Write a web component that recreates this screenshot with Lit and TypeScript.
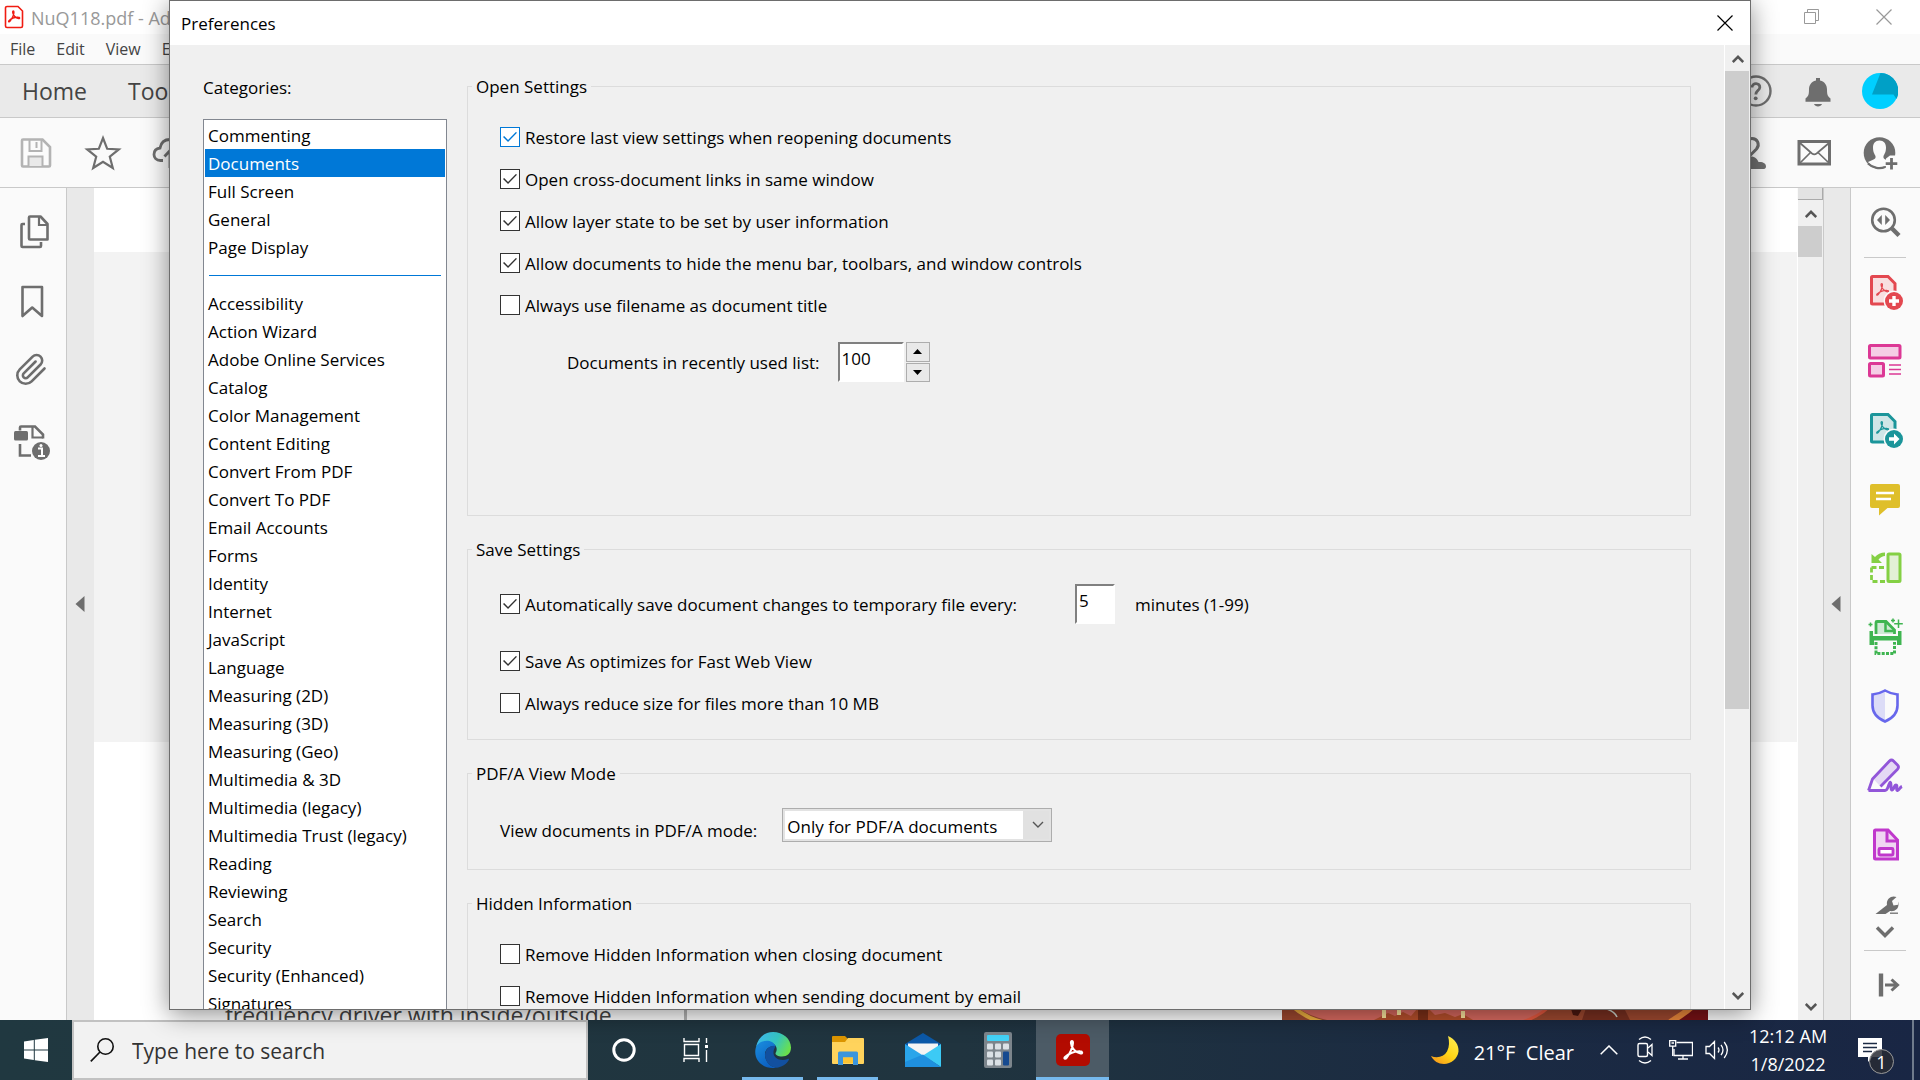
import { LitElement, html, css, svg, TemplateResult, SVGTemplateResult } from "lit";
import { customElement, property, state } from "lit/decorators.js";
import { classMap } from "lit/directives/class-map.js";

const trefoil = svg`<path d="M4 19c-1.600 1.600.2 2.700 1.800.6C8.600 16 12 9 12 5c0-2.600-2.100-2.600-2.100 0 0 4.200 5 10 9.600 10.600 2.600.2 2.100-2.300-.5-2.300C14 13.100 7.500 15.500 4 19z" fill="none" stroke-linejoin="round"/>`;

type Icon = { w: number; h: number; body: SVGTemplateResult };

const ICONS: Record<string, Icon> = {
  acrobatDoc: {
    w: 20, h: 24,
    body: svg`<path d="M3 1.500h11l4.500 4.500v15a1.500 1.500 0 0 1-1.500 1.500H3A1.500 1.500 0 0 1 1.500 21V3A1.500 1.500 0 0 1 3 1.500z" fill="#fff" stroke="#f01c12" stroke-width="1.600"/><g transform="translate(2.500 4) scale(.62)" stroke="#f01c12" stroke-width="2.200">${trefoil}</g>`,
  },
  restore: {
    w: 16, h: 16,
    body: svg`<path d="M.5 3.500h11v11H.5zM3.500 3.500v-3h11v11h-3" fill="none" stroke="#999"/>`,
  },
  close: { w: 16, h: 16, body: svg`<path d="M.5.5l15 15M15.500.5l-15 15" fill="none" stroke="currentColor" stroke-width="1.200"/>` },
  save: {
    w: 40, h: 40,
    body: svg`<path d="M6 6.500h19.500L33 14v18.500a1 1 0 0 1-1 1H6a1 1 0 0 1-1-1v-25a1 1 0 0 1 1-1z" fill="#fbfbfb" stroke="#b3b3b3" stroke-width="2.600"/><path d="M12.500 7v11h12V7" fill="none" stroke="#b3b3b3" stroke-width="2"/><path d="M19.500 9v6" stroke="#b3b3b3" stroke-width="2"/><path d="M11.500 33v-9.500h14V33" fill="#e9e9e9" stroke="#b3b3b3" stroke-width="2"/>`,
  },
  star: {
    w: 40, h: 40,
    body: svg`<path d="M20 5l4.200 10.800 11.600.6-9 7.300 3 11.300L20 28.700 10.200 35l3-11.300-9-7.300 11.600-.6z" fill="none" stroke="#6e6e6e" stroke-width="2.200"/>`,
  },
  cloud: {
    w: 40, h: 40,
    body: svg`<path d="M14 27.500H11.500c-4.500 0-6.500-3-6.500-6 0-3.500 2.500-6 6-6.500 1-5.500 5-8.500 10-8.500 6 0 9 4 9.500 9 4 .5 6 3 6 6.200 0 3.800-3 6.300-7 6.300h-2" fill="none" stroke="#6e6e6e" stroke-width="2.800"/><path d="M21 35V18M15.500 23.500l5.500-6 5.500 6" fill="none" stroke="#6e6e6e" stroke-width="2.800"/>`,
  },
  help: {
    w: 36, h: 36,
    body: svg`<circle cx="18" cy="18" r="14.500" fill="none" stroke="#6e6e6e" stroke-width="2.400"/><path d="M14 14.500c.2-5.500 8.200-5 7.800 0-.3 3-4 3.400-4 7" fill="none" stroke="#6e6e6e" stroke-width="2.800"/><circle cx="17.700" cy="25.300" r="1.900" fill="#6e6e6e"/>`,
  },
  bell: {
    w: 36, h: 36,
    body: svg`<path d="M16 5h4v2.500c5 1 7 5 7 9 0 6 1 7 3.500 9v3.300h-25v-3.300C8 23.500 9 22.500 9 16.500c0-4 2-8 7-9zM14 31h8c-1 3.200-7 3.200-8 0z" fill="#6e6e6e"/>`,
  },
  avatar: {
    w: 36, h: 36,
    body: svg`<circle cx="18" cy="18" r="18" fill="#00cfff"/><path d="M18.500 0A18 18 0 0 1 34.500 26l-3-4.500H10z" fill="#00a0c6"/>`,
  },
  share: {
    w: 40, h: 40,
    body: svg`<path d="M18 16c-3-5 1-10.500 6-10.500s8.500 5.500 4.500 10.500l-9 9" fill="none" stroke="#6e6e6e" stroke-width="3"/><path d="M10 36c0-4 3-5.500 6-5 1-5 3-7.500 7-7.500s6.500 2.500 7.500 5.500c4-.5 7.500 1 7.500 4.500 0 1.500-1 2.500-2 2.500z" fill="#6e6e6e"/>`,
  },
  mail: {
    w: 40, h: 40,
    body: svg`<rect x="5" y="8.500" width="30.500" height="22.500" fill="#fbfbfb" stroke="#6e6e6e" stroke-width="3"/><path d="M6 10l12 10.500q2.300 1.600 4.600 0L35 10M6 30l10.500-10.500M35 30L24 19.500" fill="none" stroke="#6e6e6e" stroke-width="1.700"/>`,
  },
  addUser: {
    w: 40, h: 40,
    body: svg`<circle cx="19.500" cy="20" r="15.800" fill="#6e6e6e"/><path d="M19.500 7.500c4.300 0 6.500 3 6.500 7 0 4.500-1.500 6.500-2.500 8.500-.4 2.500.5 3 3 4l4.500 2c-3 3.800-6.500 5.300-11.500 5.300s-8.500-1.500-11.500-5.300l4.500-2c2.500-1 3.400-1.500 3-4-1-2-2.500-4-2.500-8.500 0-4 2.200-7 6.500-7z" fill="#fbfbfb"/><path d="M26 37V25.500l4-3H40V38z" fill="#fbfbfb"/><path d="M8 30.500c5 5 12 5.500 17 3.500" fill="none" stroke="#6e6e6e" stroke-width="2.200"/><path d="M31.500 25v11.500M25.700 30.700h11.600" stroke="#6e6e6e" stroke-width="2.800"/>`,
  },
  pages: {
    w: 40, h: 40,
    body: svg`<path d="M14 12H11.500a1 1 0 0 0-1 1v21a1 1 0 0 0 1 1H29a1 1 0 0 0 1-1v-4" fill="none" stroke="#6e6e6e" stroke-width="2.600"/><path d="M19 4.500h10.500l7 7.500v15.500h-17.500a1 1 0 0 1-1-1v-21a1 1 0 0 1 1-1z" fill="#fbfbfb" stroke="#6e6e6e" stroke-width="2.600" stroke-linejoin="round"/><path d="M28 5v8h8.500" fill="none" stroke="#6e6e6e" stroke-width="2.200"/>`,
  },
  bookmark: {
    w: 40, h: 40,
    body: svg`<path d="M11.500 5H31v29l-9.800-8.500L11.500 34z" fill="none" stroke="#6e6e6e" stroke-width="2.600" stroke-linejoin="round"/>`,
  },
  clip: {
    w: 40, h: 40,
    body: svg`<path d="M21.440 11.050l-9.190 9.190a6 6 0 0 1-8.490-8.490l9.190-9.190a4 4 0 0 1 5.660 5.660l-9.200 9.190a2 2 0 0 1-2.830-2.830l8.490-8.480" transform="translate(3.500 1) scale(1.400)" fill="none" stroke="#6e6e6e" stroke-width="1.850" stroke-linecap="round"/>`,
  },
  tagInfo: {
    w: 40, h: 40,
    body: svg`<path d="M9 8.500V5.500a1 1 0 0 1 1-1h14l8 8v4M9 22v11.500h11" fill="none" stroke="#6e6e6e" stroke-width="2.600"/><path d="M21.500 5v10.500H32" fill="none" stroke="#6e6e6e" stroke-width="2.200"/><rect x="3" y="9" width="14" height="9.500" rx="1.500" fill="#6e6e6e"/><circle cx="30" cy="29" r="9" fill="#6e6e6e"/><path d="M27 26.500h4V34m-4 0h7" fill="none" stroke="#fff" stroke-width="2"/><circle cx="30" cy="23.500" r="1.500" fill="#fff"/>`,
  },
  zoomTool: {
    w: 40, h: 40,
    body: svg`<circle cx="18.500" cy="18" r="11.300" fill="none" stroke="#6e6e6e" stroke-width="2.600"/><path d="M27 26.500l7 7" stroke="#6e6e6e" stroke-width="4.400"/><path d="M16.800 13v10L12 18zM20.200 13v10L25 18z" fill="#6e6e6e"/>`,
  },
  createPdf: {
    w: 40, h: 40,
    body: svg`<path d="M7.500 4.500h15.500l7 7V32h-22.500a1 1 0 0 1-1-1V5.500a1 1 0 0 1 1-1z" fill="#f8dfe0" stroke="#e34850" stroke-width="3"/><g transform="translate(9.500 9.500) scale(.66)" stroke="#e34850" stroke-width="1.900">${trefoil}</g><circle cx="29" cy="29" r="10.500" fill="#fafafa"/><circle cx="29" cy="29" r="9" fill="#e34850"/><path d="M29 24v10M24 29h10" stroke="#fff" stroke-width="3.400"/>`,
  },
  organize: {
    w: 40, h: 40,
    body: svg`<rect x="4.500" y="4.500" width="30.500" height="12.500" rx="1" fill="#f5cde5" stroke="#dc3895" stroke-width="3"/><rect x="4.500" y="22.500" width="14" height="12.500" rx="1" fill="#f5cde5" stroke="#dc3895" stroke-width="3"/><path d="M24 24h12M24 28.500h12M24 33h12" stroke="#dc3895" stroke-width="1.500"/>`,
  },
  exportPdf: {
    w: 40, h: 40,
    body: svg`<path d="M7.500 4.500h15.500l7 7V32h-22.500a1 1 0 0 1-1-1V5.500a1 1 0 0 1 1-1z" fill="#cfe6e7" stroke="#1b959a" stroke-width="3"/><g transform="translate(9.500 9.500) scale(.66)" stroke="#1b959a" stroke-width="1.900">${trefoil}</g><circle cx="29" cy="29" r="10.500" fill="#fafafa"/><circle cx="29" cy="29" r="9" fill="#1b959a"/><path d="M24 27.300h5v-3.800l5.500 5.500-5.500 5.500v-3.800h-5z" fill="#fff"/>`,
  },
  comment: {
    w: 40, h: 40,
    body: svg`<path d="M7 5h26a2 2 0 0 1 2 2v20a2 2 0 0 1-2 2H22.500l-8.500 7.500V29H7a2 2 0 0 1-2-2V7a2 2 0 0 1 2-2z" fill="#dfbf2a"/><path d="M11 14h18M11 20h15" stroke="#fff" stroke-width="2.600"/>`,
  },
  rotate: {
    w: 40, h: 40,
    body: svg`<rect x="23" y="6" width="12" height="27.500" rx="1" fill="#e2f0d5" stroke="#84d044" stroke-width="3"/><path d="M6.500 19.500v14h14M6.500 19.500h14" fill="none" stroke="#84d044" stroke-width="2.800" stroke-dasharray="5 2.500"/><path d="M6.500 6v9H17l-3.500-3.500q3-3.500 6.500-3.500V4.500c-4 0-8 1.800-10 4.500z" fill="#84d044"/>`,
  },
  scan: {
    w: 40, h: 40,
    body: svg`<path d="M11 17V5.500a1 1 0 0 1 1-1h9l8.500 8.500v4" fill="#cfead5" stroke="#3fb551" stroke-width="2.800"/><path d="M20.500 5v9h8" fill="none" stroke="#3fb551" stroke-width="2.500"/><path d="M4.500 14v14H9v-4.500h23V28h4.500V14h-3.500v5H8v-5z" fill="#3fb551"/><path d="M11 25v11.500h18.500V25" fill="none" stroke="#3fb551" stroke-width="3" stroke-dasharray="3 1.300"/><path d="M33.500 2.500v8.500M29.200 6.700h8.600M28 1.500v4M26 3.500h4M5.500 5.500v4M3.500 7.500h4" stroke="#3fb551" stroke-width="1.500"/>`,
  },
  shield: {
    w: 40, h: 40,
    body: svg`<path d="M20 4.500q-6 3.500-12.500 4v11c0 8 5.500 13 12.500 16z" fill="#dcdcf7"/><path d="M20 4.500q6 3.500 12.500 4v11c0 8-5.500 13-12.500 16-7-3-12.500-8-12.500-16v-11q6.500-.5 12.500-4z" fill="none" stroke="#6767ec" stroke-width="2.600"/>`,
  },
  sign: {
    w: 40, h: 40,
    body: svg`<path d="M8 23.500L25 5.500q2-1.500 4 .5l3.500 3.500q1.500 2 0 4L15 31z" fill="#e5d9f4"/><path d="M3.500 35.500l4-11.500L24.500 6q2-2 4 0l4 4q2 2 0 4.200L15.500 31.500" fill="none" stroke="#9256d9" stroke-width="2.800" stroke-linejoin="round"/><path d="M3.500 35.500H20c3 0 2.500-4 5-8 1.500-1 .5 8 2 7.500 2 0 2-5 4-5s-.5 5 1.500 5.500c2-.5 2-3 4.500-4" fill="none" stroke="#9256d9" stroke-width="3" stroke-linejoin="round"/>`,
  },
  form: {
    w: 40, h: 40,
    body: svg`<path d="M10.500 6h12.500l9.500 10v19h-22a1 1 0 0 1-1-1V7a1 1 0 0 1 1-1z" fill="#f0d5f2" stroke="#c038cc" stroke-width="3"/><path d="M22 6v11h10.500" fill="none" stroke="#c038cc" stroke-width="3"/><rect x="14" y="24.500" width="14" height="6.500" rx="1" fill="#fff" stroke="#c038cc" stroke-width="2.800"/>`,
  },
  wrench: {
    w: 40, h: 18,
    body: svg`<path d="M10.500 18L22 9c-1-6 4-10 9.500-8L27 5l1.500 4.500 4.500-.8 0-3.200c2 6.500-2.500 10.500-8 9.500l-4.500 3z" fill="#6e6e6e"/><path d="M25 17.200h8" stroke="#6e6e6e" stroke-width="1.300"/>`,
  },
  chevronDown: {
    w: 40, h: 12,
    body: svg`<path d="M12 1.500l8 8 8-8" fill="none" stroke="#6e6e6e" stroke-width="3.400"/>`,
  },
  exit: {
    w: 40, h: 40,
    body: svg`<path d="M16 8.500v23" stroke="#6e6e6e" stroke-width="4.400"/><path d="M20 20h12M26.500 14.500l6 5.500-6 5.500" fill="none" stroke="#6e6e6e" stroke-width="3"/>`,
  },
  scrollUp: { w: 12, h: 9, body: svg`<path d="M.8 8L6 2.800 11.200 8" fill="none" stroke="#555" stroke-width="2.500"/>` },
  scrollDown: { w: 12, h: 9, body: svg`<path d="M.8 1L6 6.200 11.200 1" fill="none" stroke="#555" stroke-width="2.500"/>` },
  collapse: { w: 10, h: 16, body: svg`<path d="M9.500 0v16L.5 8z" fill="#6e6e6e"/>` },
  spinUp: { w: 9, h: 5, body: svg`<path d="M0 5h9L4.500 0z" fill="#000"/>` },
  spinDown: { w: 9, h: 5, body: svg`<path d="M0 0h9L4.500 5z" fill="#000"/>` },
  selectArrow: { w: 12, h: 8, body: svg`<path d="M1 1l5 5 5-5" fill="none" stroke="#555" stroke-width="1.400"/>` },
  windows: {
    w: 24, h: 24,
    body: svg`<path d="M0 3.500L9.800 2v9.500H0zM10.800 1.800L24 0v11.500H10.800zM0 12.500h9.800V22L0 20.500zM10.800 12.500H24V24l-13.200-1.800z" fill="#fff"/>`,
  },
  search: {
    w: 24, h: 24,
    body: svg`<circle cx="15.500" cy="8.500" r="7.700" fill="none" stroke="#111" stroke-width="1.600"/><path d="M10 14L.8 23.300" stroke="#111" stroke-width="1.700"/>`,
  },
  cortana: { w: 24, h: 24, body: svg`<circle cx="12" cy="12" r="10.200" fill="none" stroke="#fff" stroke-width="3"/>` },
  taskView: {
    w: 26, h: 24,
    body: svg`<path d="M1 0v3.500h15V0M1.500 6.500h14v11h-14zM1 24v-3.500h15V24M23.500 0v5M23.500 12v12" fill="none" stroke="#fff" stroke-width="1.400"/><rect x="22" y="7" width="3" height="3" fill="#fff"/>`,
  },
  edge: {
    w: 36, h: 36,
    body: svg`<defs><linearGradient id="ea" x1="0" x2="1" y1=".2" y2=".6"><stop offset="0" stop-color="#3fb8f0"/><stop offset=".55" stop-color="#35c6c0"/><stop offset="1" stop-color="#6be04a"/></linearGradient><linearGradient id="eb" x1="0" x2=".6" y1="0" y2="1"><stop offset="0" stop-color="#1b8fe0"/><stop offset="1" stop-color="#0b5fc0"/></linearGradient></defs><path d="M1 15C3 5 10 0 18 0c10 0 18 7 18 15.500 0 6-4 9-9 9-4 0-6.500-1.500-6.500-3 0-1 1.200-1.500 1.200-4.500C21.700 11 10 6 1 15z" fill="url(#ea)"/><path d="M.5 17C2 8 17 5.500 20.500 14c-7-.5-11 4-10.500 9.500.5 6 5 11 11 12.200C9 37.500-1.500 29 .5 17z" fill="url(#eb)"/><path d="M20.500 14c-6-1-10.500 4-10.500 9.500.5 7 6 12 12 12.200 6-1 10-4.200 11.800-7.700.5-1-.3-1.500-1.200-1-6.600 3-15.100-1-14.100-7.500.4-2.500 1.500-4 2-5.500z" fill="#12509f"/>`,
  },
  explorer: {
    w: 34, h: 30,
    body: svg`<path d="M1 2a1 1 0 0 1 1-1h12l3 3v6H1z" fill="#dc9500"/><path d="M1 7h13l3-4h15a1 1 0 0 1 1 1v24a1 1 0 0 1-1 1H2a1 1 0 0 1-1-1z" fill="#ffd35c"/><path d="M7 30V18a1.500 1.500 0 0 1 1.500-1.500h17A1.500 1.500 0 0 1 27 18v12h-5v-7.500H12V30z" fill="#3b95dc"/><path d="M12 22.500h10V28H12z" fill="#fdc433"/>`,
  },
  mailApp: {
    w: 36, h: 34,
    body: svg`<path d="M0 11L18 0l18 11v6H0z" fill="#0c59a8"/><path d="M3 10.500h30V18L18 28 3 18z" fill="#f4f4f4"/><path d="M0 11l18 11.500L0 34z" fill="#2aa5ea"/><path d="M36 11L18 22.500 36 34z" fill="#3ccaf5"/><path d="M0 34V29l18-7.500L36 34z" fill="#1f90df"/>`,
  },
  calc: {
    w: 28, h: 36,
    body: svg`<rect width="28" height="36" rx="2" fill="#7c858c"/><rect x="3" y="3" width="22" height="6" rx="1" fill="#43d3f8"/><g fill="#dbe1e6"><rect x="3" y="11.500" width="6" height="6" rx="1"/><rect x="11" y="11.500" width="6" height="6" rx="1"/><rect x="19" y="11.500" width="6" height="6" rx="1"/><rect x="3" y="19.500" width="6" height="6" rx="1"/><rect x="11" y="19.500" width="6" height="6" rx="1"/><rect x="3" y="27.500" width="6" height="6" rx="1"/><rect x="11" y="27.500" width="6" height="6" rx="1"/></g><rect x="19" y="19.500" width="6" height="14" rx="1" fill="#164a90"/>`,
  },
  acrobatApp: {
    w: 34, h: 32,
    body: svg`<rect width="34" height="32" rx="5" fill="#b30b00"/><g transform="translate(5 4)" stroke="#fff" stroke-width="2">${trefoil}</g>`,
  },
  moon: {
    w: 28, h: 28,
    body: svg`<defs><linearGradient id="mo" x1="1" x2=".3" y1="0" y2="1"><stop offset="0" stop-color="#ffef5a"/><stop offset=".6" stop-color="#ffd617"/><stop offset="1" stop-color="#f9a11b"/></linearGradient></defs><path d="M17 0c7 3 11 9 10.500 15.500C26.500 23 20 28 13 28 7.500 28 2.500 25 0 20c6 2.500 13 1 16-4.500 2.500-5 2.500-10 1-15.500z" fill="url(#mo)"/>`,
  },
  trayUp: { w: 18, h: 10, body: svg`<path d="M.7 9.300L9 1l8.300 8.300" fill="none" stroke="#fff" stroke-width="1.500"/>` },
  meet: {
    w: 18, h: 28,
    body: svg`<path d="M3 3.500q6-5 12 0M3 24.500q6 5 12 0" fill="none" stroke="#fff" stroke-width="1.300"/><rect x="2" y="7.500" width="9.500" height="13" rx="1.500" fill="none" stroke="#fff" stroke-width="1.400"/><path d="M12 12l4-3.500v11L12 16" fill="none" stroke="#fff" stroke-width="1.300"/>`,
  },
  network: {
    w: 24, h: 20,
    body: svg`<path d="M7.500 2.500h16v13H5V9M14 15.500V19M9 19h10" fill="none" stroke="#fff" stroke-width="1.300"/><path d="M.7.7h6v5.500h-6zM3.700 6v10M2.500 3h2.500" fill="none" stroke="#fff" stroke-width="1.300"/>`,
  },
  speaker: {
    w: 24, h: 20,
    body: svg`<path d="M1 6.500h3.500l5-5v17l-5-5H1zM13 7.500q2 2.500 0 5M16 4.800q4 5.200 0 10.400M19.200 2q6.300 8 0 16" fill="none" stroke="#fff" stroke-width="1.300"/>`,
  },
  note: {
    w: 24, h: 24,
    body: svg`<path d="M0 0h24v19h-9.500L10 24v-5H0z" fill="#fff"/><path d="M5 5.500h14M5 9.500h14M5 13.500h9" stroke="#1c2b44" stroke-width="1.400"/>`,
  },
};

const icon = (name: string): TemplateResult => {
  const { w, h, body } = ICONS[name];
  return html`<svg width=${w} height=${h} viewBox="0 0 ${w} ${h}" aria-hidden="true">${body}</svg>`;
};

const base = css`
  * { box-sizing: border-box; }
  svg { display: block; flex: none; }
  button {
    display: grid; place-items: center; margin: 0; padding: 0; border: 0;
    background: none; color: inherit; font: inherit; flex: none;
  }
`;

@customElement("scroll-track")
class ScrollTrack extends LitElement {
  @property({ type: Number }) share = 10;
  static styles = [base, css`
    :host { display: flex; flex-direction: column; width: 26px; background: #f0f0f0; border-left: 1px solid #fff; }
    button { height: 26px; }
    .track { flex: 1; padding-right: 1px; }
    .thumb { background: #cdcdcd; }
  `];
  render() {
    return html`
      <button aria-label="Scroll up">${icon("scrollUp")}</button>
      <div class="track"><div class="thumb" style="height:${this.share}%"></div></div>
      <button aria-label="Scroll down">${icon("scrollDown")}</button>`;
  }
}

@customElement("check-option")
class CheckOption extends LitElement {
  @property() label = "";
  @property({ type: Boolean }) checked = false;
  @property({ type: Boolean }) active = false;
  static styles = [base, css`
    :host { display: block; }
    label { display: flex; align-items: center; gap: 5px; }
    span { padding-top: 2px; line-height: 22px; }
    input {
      appearance: none; flex: none; width: 20px; height: 20px; margin: 0; display: grid; place-items: center;
      border: 1px solid #333; background: #fff; color: #333;
    }
    input:checked::before {
      content: ""; width: 14px; height: 10px; background: currentColor;
      clip-path: polygon(0 50%, 8% 40%, 36% 80%, 92% 0, 100% 8%, 36% 100%);
    }
    .active { border-color: #0078d7; color: #0078d7; }
  `];
  render() {
    return html`<label><input type="checkbox" class=${classMap({ active: this.active })} .checked=${this.checked}
      @change=${(e: Event) => (this.checked = (e.target as HTMLInputElement).checked)} /><span>${this.label}</span></label>`;
  }
}

const PINNED = ["Commenting", "Documents", "Full Screen", "General", "Page Display"];
const CATEGORIES = [
  "Accessibility", "Action Wizard", "Adobe Online Services", "Catalog", "Color Management", "Content Editing",
  "Convert From PDF", "Convert To PDF", "Email Accounts", "Forms", "Identity", "Internet", "JavaScript", "Language",
  "Measuring (2D)", "Measuring (3D)", "Measuring (Geo)", "Multimedia & 3D", "Multimedia (legacy)",
  "Multimedia Trust (legacy)", "Reading", "Reviewing", "Search", "Security", "Security (Enhanced)", "Signatures",
];

@customElement("preferences-dialog")
class PreferencesDialog extends LitElement {
  @state() private selected = "Documents";
  @state() private recent = 100;

  static styles = [base, css`
    :host {
      display: flex; flex-direction: column; overflow: hidden; color: #000; background: #f0f0f0;
      border: 1px solid #6d6d6d; box-shadow: 0 4px 24px rgba(0, 0, 0, 0.45); font-size: 17px;
    }
    .titlebar {
      flex: none; display: flex; align-items: center; justify-content: space-between; height: 44px;
      padding: 0 17px 0 11px; background: #fff;
    }
    .title { padding-top: 2px; line-height: 22px; }
    .content { flex: 1; min-height: 0; display: flex; }
    .categories { flex: none; width: 244px; margin-left: 33px; display: flex; flex-direction: column; padding-top: 31px; line-height: 24px; }
    .heading { margin-bottom: 19px; }
    .list {
      flex: 1; min-height: 0; overflow: hidden; background: #fff; padding: 1px;
      border: 1px solid #828790; border-bottom: 0;
    }
    .list button { display: block; width: 100%; height: 28px; padding: 2px 3px 0; text-align: left; line-height: 26px; }
    .list .selected { background: #0078d7; color: #fff; }
    .list hr { height: 1px; margin: 14px 4px 13px; border: 0; background: #0078d7; }
    .settings { flex: 1; min-width: 0; overflow: hidden; padding: 28px 33px 0 20px; display: flex; flex-direction: column; gap: 20px; }
    fieldset {
      flex: none; min-width: 0; margin: 0; border: 1px solid #dcdcdc; display: flex; flex-direction: column;
      padding: 26px 32px 31px; gap: 18px;
    }
    legend { margin-left: -28px; padding: 2px 4px 0; line-height: 24px; }
    .open { min-height: 443px; }
    .save { padding-top: 22px; padding-bottom: 24px; }
    .view { padding-top: 22px; padding-bottom: 27px; }
    .row { display: flex; align-items: center; }
    .row label { padding-top: 2px; line-height: 22px; }
    .recent { padding-left: 67px; gap: 18px; margin-top: 7px; }
    .autosave { gap: 20px; margin-bottom: 7px; }
    .autosave .option { flex: none; width: 555px; }
    .mode { align-items: flex-end; gap: 25px; }
    .entry {
      height: 40px; padding: 0 2px 7px; border: 2px solid; border-color: #808080 #fff #fff #808080; border-radius: 0;
      background: #fff; color: #000; font: inherit; outline: 0;
    }
    .wide { width: 66px; }
    .narrow { width: 40px; }
    .stepper { display: flex; gap: 2px; }
    .spin { display: grid; gap: 1px; width: 24px; }
    .spin button { border: 1px solid #adadad; background: #e9e9e9; }
    .picker { position: relative; width: 270px; }
    select {
      appearance: none; display: block; width: 100%; height: 34px; margin: 0; padding: 2px 4px 0; border: 1px solid #adadad; border-radius: 0;
      background: linear-gradient(#e1e1e1, #e1e1e1) right / 28px 100% no-repeat #fff; box-shadow: inset 0 0 0 2px #e3e3e3;
      color: #000; font: inherit;
    }
    .picker svg { position: absolute; right: 8px; top: 13px; pointer-events: none; }
  `];

  private item(name: string) {
    const on = name === this.selected;
    return html`<button role="option" aria-selected=${on} class=${classMap({ selected: on })}
      @click=${() => (this.selected = name)}>${name}</button>`;
  }

  render() {
    return html`
      <header class="titlebar"><span class="title">Preferences</span><button aria-label="Close">${icon("close")}</button></header>
      <div class="content">
        <div class="categories">
          <div class="heading" id="cat">Categories:</div>
          <div class="list" role="listbox" aria-labelledby="cat">
            ${PINNED.map((c) => this.item(c))}<hr />${CATEGORIES.map((c) => this.item(c))}
          </div>
        </div>
        <div class="settings">
          <fieldset class="open">
            <legend>Open Settings</legend>
            <check-option label="Restore last view settings when reopening documents" checked active></check-option>
            <check-option label="Open cross-document links in same window" checked></check-option>
            <check-option label="Allow layer state to be set by user information" checked></check-option>
            <check-option label="Allow documents to hide the menu bar, toolbars, and window controls" checked></check-option>
            <check-option label="Always use filename as document title"></check-option>
            <div class="row recent">
              <label for="recent">Documents in recently used list:</label>
              <div class="stepper">
                <input class="entry wide" id="recent" .value=${String(this.recent)}
                  @change=${(e: Event) => (this.recent = Number((e.target as HTMLInputElement).value) || 0)} />
                <div class="spin">
                  <button aria-label="Increase" @click=${() => this.recent++}>${icon("spinUp")}</button>
                  <button aria-label="Decrease" @click=${() => this.recent--}>${icon("spinDown")}</button>
                </div>
              </div>
            </div>
          </fieldset>
          <fieldset class="save">
            <legend>Save Settings</legend>
            <div class="row autosave">
              <check-option class="option" label="Automatically save document changes to temporary file every:" checked></check-option>
              <input class="entry narrow" id="minutes" value="5" />
              <label for="minutes">minutes (1-99)</label>
            </div>
            <check-option label="Save As optimizes for Fast Web View" checked></check-option>
            <check-option label="Always reduce size for files more than 10 MB"></check-option>
          </fieldset>
          <fieldset class="view">
            <legend>PDF/A View Mode</legend>
            <div class="row mode">
              <label for="mode">View documents in PDF/A mode:</label>
              <div class="picker">
                <select id="mode"><option>Only for PDF/A documents</option></select>
                ${icon("selectArrow")}
              </div>
            </div>
          </fieldset>
          <fieldset>
            <legend>Hidden Information</legend>
            <check-option label="Remove Hidden Information when closing document"></check-option>
            <check-option label="Remove Hidden Information when sending document by email"></check-option>
          </fieldset>
        </div>
        <scroll-track share="70"></scroll-track>
      </div>`;
  }
}

@customElement("task-bar")
class TaskBar extends LitElement {
  static styles = [base, css`
    :host {
      display: flex; height: 60px; color: #fff; font-size: 18px;
      background: linear-gradient(90deg, #203840, #20343f 50%, #1b2b42 75%, #192644);
    }
    button { height: 60px; }
    .start { width: 72px; }
    .search {
      flex: none; width: 516px; display: flex; align-items: center; gap: 18px; padding: 0 16px;
      border: 2px solid #c2c2c2; background: #f2f2f2;
    }
    .search input { flex: 1; min-width: 0; border: 0; padding: 2px 0 0; background: none; font: inherit; font-size: 21px; outline: 0; }
    .search input::placeholder { color: #333; opacity: 1; }
    .tool { width: 72px; }
    .apps { display: flex; gap: 2px; padding-left: 4px; }
    .apps button { width: 73px; position: relative; }
    .running::after { content: ""; position: absolute; left: 6px; right: 6px; bottom: 0; height: 3px; background: #76b9ed; }
    .current { background: #4c5b66; }
    .current::after { left: 0; right: 0; }
    .tray { margin-left: auto; display: flex; align-items: center; }
    .weather { display: flex; align-items: center; gap: 15px; margin-right: 23px; font-size: 20px; white-space: pre; }
    .weather span { padding-top: 4px; }
    .system { display: flex; align-items: center; gap: 12px; }
    .system button { width: 24px; }
    .clock { width: 110px; margin-left: 4px; text-align: center; line-height: 28px; }
    .notes { width: 54px; margin-right: 15px; position: relative; }
    .badge {
      position: absolute; left: 26px; top: 29px; width: 25px; height: 25px; border: 1px solid #9a9a9a; border-radius: 50%;
      background: rgba(40, 44, 52, 0.85); display: grid; place-items: center;
    }
    .desktop { width: 8px; border-left: 2px solid #6f7b8c; }
  `];
  render() {
    return html`
      <button class="start" aria-label="Start">${icon("windows")}</button>
      <label class="search">${icon("search")}<input placeholder="Type here to search" aria-label="Search" /></label>
      <button class="tool" aria-label="Cortana">${icon("cortana")}</button>
      <button class="tool" aria-label="Task view">${icon("taskView")}</button>
      <div class="apps">
        <button class="running" aria-label="Edge">${icon("edge")}</button>
        <button class="running" aria-label="File Explorer">${icon("explorer")}</button>
        <button aria-label="Mail">${icon("mailApp")}</button>
        <button aria-label="Calculator">${icon("calc")}</button>
        <button class="running current" aria-label="Acrobat">${icon("acrobatApp")}</button>
      </div>
      <div class="tray">
        <div class="weather">${icon("moon")}<span>21°F  Clear</span></div>
        <div class="system">
          <button aria-label="Hidden icons">${icon("trayUp")}</button>
          <button aria-label="Meet now">${icon("meet")}</button>
          <button aria-label="Network">${icon("network")}</button>
          <button aria-label="Volume">${icon("speaker")}</button>
        </div>
        <div class="clock"><div>12:12 AM</div><div>1/8/2022</div></div>
        <button class="notes" aria-label="Notifications">${icon("note")}<span class="badge">1</span></button>
        <button class="desktop" aria-label="Show desktop"></button>
      </div>`;
  }
}

const TOOLS = ["createPdf", "organize", "exportPdf", "comment", "rotate", "scan", "shield", "sign", "form"];
const PANELS = ["pages", "bookmark", "clip", "tagInfo"];

@customElement("app-root")
class AppRoot extends LitElement {
  static styles = [base, css`
    :host {
      display: flex; flex-direction: column; position: relative; height: 100vh; overflow: hidden;
      font-family: "Open Sans", "Noto Sans", sans-serif; font-size: 17px; color: #444; background: #fafafa;
    }
    header, .bar { flex: none; display: flex; align-items: center; }
    .titlebar { height: 34px; padding: 0 28px 0 4px; gap: 7px; background: #fff; color: #999; }
    .name { font-size: 18px; flex: 1; padding-top: 2px; }
    .controls { display: flex; gap: 56px; }
    .menus { height: 31px; padding: 0 10px; gap: 21px; border-bottom: 1px solid #c9c9c9; font-size: 16px; }
    .tabs { height: 53px; padding: 0 22px; gap: 41px; background: #eaeaea; border-bottom: 1px solid #c9c9c9; font-size: 23px; }
    .toolbar { height: 70px; padding: 0 20px 0 17px; gap: 26px; border-bottom: 1px solid #c9c9c9; }
    .end { margin-left: auto; display: flex; align-items: center; gap: 26px; }
    .body { flex: 1; min-height: 0; display: flex; }
    .panels { flex: none; width: 67px; border-right: 1px solid #c9c9c9; padding: 24px 0 0 11px; display: flex; flex-direction: column; gap: 30px; }
    .panels button, .tools button { width: 40px; }
    .gutter { flex: none; width: 27px; padding-right: 2px; background: #e9e9e9; }
    .right { width: 26px; }
    .document { flex: 1; min-width: 0; background: #fff; display: flex; flex-direction: column; padding-top: 64px; overflow: hidden; }
    .band { flex: none; height: 490px; background: #f3f3f3; }
    .page { flex: 1; display: flex; align-items: flex-end; }
    .text { flex: none; width: 590px; margin: 0 0 -10px; padding-left: 131px; font-size: 23px; line-height: 30px; white-space: nowrap; }
    .rule { width: 3px; height: 200px; background: #b5b5b5; }
    .photo { width: 426px; height: 60px; margin: 0 89px 0 auto; }
    .scroller { flex: none; width: 27px; display: flex; flex-direction: column; border-right: 1px solid #c9c9c9; }
    .split { height: 12px; margin-left: 1px; background: #e3e3e3; border-right: 1px solid #aaa; border-bottom: 1px solid #aaa; }
    .scroller scroll-track { flex: 1; }
    .tools { flex: none; width: 70px; border-left: 1px solid #c9c9c9; padding: 14px 1px 0 0; display: flex; flex-direction: column; align-items: center; }
    .tools hr { width: 42px; height: 1px; flex: none; margin: 15px 0 14px; border: 0; background: #c9c9c9; }
    .stack { display: flex; flex-direction: column; gap: 29px; margin-bottom: 32px; }
    .more { display: flex; flex-direction: column; gap: 12px; margin-bottom: -3px; }
    .dialog { position: absolute; top: 0; left: 169px; right: 169px; bottom: 70px; }
    task-bar { position: relative; flex: none; }
  `];
  render() {
    return html`
      <header class="titlebar">
        ${icon("acrobatDoc")}<span class="name">NuQ118.pdf - Adobe</span>
        <div class="controls">
          <button aria-label="Restore window">${icon("restore")}</button>
          <button aria-label="Close window">${icon("close")}</button>
        </div>
      </header>
      <nav class="bar menus"><button>File</button><button>Edit</button><button>View</button><button>E-Sign</button></nav>
      <nav class="bar tabs">
        <button>Home</button><button>Tools</button>
        <div class="end">
          <button aria-label="Help">${icon("help")}</button>
          <button aria-label="Notifications">${icon("bell")}</button>
          <button aria-label="Account">${icon("avatar")}</button>
        </div>
      </nav>
      <div class="bar toolbar">
        <button aria-label="Save">${icon("save")}</button>
        <button aria-label="Star file">${icon("star")}</button>
        <button aria-label="Upload">${icon("cloud")}</button>
        <div class="end">
          <button aria-label="Share link">${icon("share")}</button>
          <button aria-label="Send by email">${icon("mail")}</button>
          <button aria-label="Invite people">${icon("addUser")}</button>
        </div>
      </div>
      <div class="body">
        <nav class="panels">${PANELS.map((p) => html`<button aria-label=${p}>${icon(p)}</button>`)}</nav>
        <button class="gutter" aria-label="Collapse left pane">${icon("collapse")}</button>
        <main class="document">
          <div class="band"></div>
          <div class="page">
            <p class="text">frequency driver with inside/outside</p>
            <div class="rule"></div>
            <svg class="photo" viewBox="0 0 426 60" preserveAspectRatio="none" aria-hidden="true">
              <rect width="426" height="60" fill="#a04a30" />
              <path d="M10 44Q30 60 60 62H240Q262 54 272 44V0H10z" fill="#da6a60" />
              <path d="M10 46Q24 58 40 62" stroke="#f0b040" stroke-width="4" fill="none" />
              <path d="M240 62Q258 56 268 46" stroke="#e85a40" stroke-width="3" fill="none" />
              <path d="M92 60l6-3 8-4 7 3 8-4 8 4 6-7h12l6 6 10-2 10 4 8-3 10 6z" fill="#b8502c" />
              <path d="M136 49h10v11h-10z" fill="#7e3018" />
              <path d="M100 50h4v8h-4zM115 50h4v5h-4zM179 51h4v7h-4z" fill="#ffe9a0" />
              <path d="M289 49h11l-4 7-5-1z" fill="#4c1810" />
              <path d="M304 48h38l6 12h-48z" fill="#7a3020" />
              <path d="M325 49q8 3 10 8" stroke="#cfd8d0" stroke-width="1.500" fill="none" />
              <path d="M385 62l26-17h15v17z" fill="#7a1216" />
              <path d="M388 62q14-8 24-17" stroke="#ee8a3c" stroke-width="6" fill="none" />
            </svg>
          </div>
        </main>
        <div class="scroller"><div class="split"></div><scroll-track share="4"></scroll-track></div>
        <button class="gutter right" aria-label="Collapse right pane">${icon("collapse")}</button>
        <nav class="tools">
          <button aria-label="Find tools">${icon("zoomTool")}</button>
          <hr />
          <div class="stack">${TOOLS.map((t) => html`<button aria-label=${t}>${icon(t)}</button>`)}</div>
          <div class="more">
            <button aria-label="More tools">${icon("wrench")}</button>
            <button aria-label="Show more">${icon("chevronDown")}</button>
          </div>
          <hr />
          <button aria-label="Expand pane">${icon("exit")}</button>
        </nav>
      </div>
      <task-bar></task-bar>
      <preferences-dialog class="dialog" role="dialog" aria-label="Preferences"></preferences-dialog>`;
  }
}
